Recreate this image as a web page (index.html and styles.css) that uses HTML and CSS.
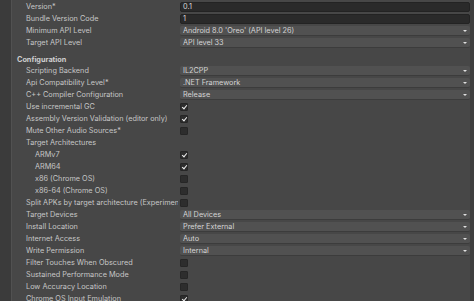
FILE: index.html
```html
<!DOCTYPE html>
<html lang="en">
<head>
  <meta charset="UTF-8" />
  <meta name="viewport" content="width=device-width, initial-scale=1" />
  <title>Player Settings - Android</title>
  <link rel="stylesheet" href="styles.css">
</head>
<body>
  <div class="window">
    <div class="gutter"></div>

    <div class="inspector">
      <div class="row">
        <span class="label">Version*</span>
        <div class="value"><div class="text-field">0.1</div></div>
      </div>
      <div class="row">
        <span class="label">Bundle Version Code</span>
        <div class="value"><div class="text-field">1</div></div>
      </div>
      <div class="row">
        <span class="label">Minimum API Level</span>
        <div class="value"><div class="dropdown">Android 8.0 'Oreo' (API level 26)</div></div>
      </div>
      <div class="row">
        <span class="label">Target API Level</span>
        <div class="value"><div class="dropdown">API level 33</div></div>
      </div>

      <div class="section-title">Configuration</div>

      <div class="row">
        <span class="label">Scripting Backend</span>
        <div class="value"><div class="dropdown">IL2CPP</div></div>
      </div>
      <div class="row">
        <span class="label">Api Compatibility Level*</span>
        <div class="value"><div class="dropdown">.NET Framework</div></div>
      </div>
      <div class="row">
        <span class="label">C++ Compiler Configuration</span>
        <div class="value"><div class="dropdown">Release</div></div>
      </div>
      <div class="row">
        <span class="label">Use incremental GC</span>
        <div class="value"><span class="checkbox checked"></span></div>
      </div>
      <div class="row">
        <span class="label">Assembly Version Validation (editor only)</span>
        <div class="value"><span class="checkbox checked"></span></div>
      </div>
      <div class="row">
        <span class="label">Mute Other Audio Sources*</span>
        <div class="value"><span class="checkbox"></span></div>
      </div>
      <div class="row">
        <span class="label">Target Architectures</span>
        <div class="value"></div>
      </div>
      <div class="row">
        <span class="label indent">ARMv7</span>
        <div class="value"><span class="checkbox checked"></span></div>
      </div>
      <div class="row">
        <span class="label indent">ARM64</span>
        <div class="value"><span class="checkbox checked"></span></div>
      </div>
      <div class="row">
        <span class="label indent">x86 (Chrome OS)</span>
        <div class="value"><span class="checkbox"></span></div>
      </div>
      <div class="row">
        <span class="label indent">x86-64 (Chrome OS)</span>
        <div class="value"><span class="checkbox"></span></div>
      </div>
      <div class="row">
        <span class="label">Split APKs by target architecture (Experimental)</span>
        <div class="value"><span class="checkbox"></span></div>
      </div>
      <div class="row">
        <span class="label">Target Devices</span>
        <div class="value"><div class="dropdown">All Devices</div></div>
      </div>
      <div class="row">
        <span class="label">Install Location</span>
        <div class="value"><div class="dropdown">Prefer External</div></div>
      </div>
      <div class="row">
        <span class="label">Internet Access</span>
        <div class="value"><div class="dropdown">Auto</div></div>
      </div>
      <div class="row">
        <span class="label">Write Permission</span>
        <div class="value"><div class="dropdown">Internal</div></div>
      </div>
      <div class="row">
        <span class="label">Filter Touches When Obscured</span>
        <div class="value"><span class="checkbox"></span></div>
      </div>
      <div class="row">
        <span class="label">Sustained Performance Mode</span>
        <div class="value"><span class="checkbox"></span></div>
      </div>
      <div class="row">
        <span class="label">Low Accuracy Location</span>
        <div class="value"><span class="checkbox"></span></div>
      </div>
      <div class="row">
        <span class="label">Chrome OS Input Emulation</span>
        <div class="value"><span class="checkbox checked"></span></div>
      </div>
    </div>

    <div class="scrollbar"></div>
  </div>
</body>
</html>
```

FILE: styles.css
```css
body {
  margin: 0;
  background: #474747;
  color: #c6c6c6;
  font-family: Inter, "Noto Sans", sans-serif;
  font-size: 7.3px;
  overflow: hidden;
}
.window {
  display: flex;
  height: 301px;
}
.gutter {
  width: 11px;
  flex: 0 0 11px;
  background: #3b3b3b;
  border-right: 1px solid #515151;
}
.inspector {
  flex: 1;
  padding-top: 1px;
  min-width: 0;
}
.scrollbar {
  width: 4px;
  flex: 0 0 4px;
  background: #3e3e3e;
}
.row {
  display: flex;
  align-items: center;
  height: 12px;
}
.label {
  flex: 0 0 166px;
  padding-left: 14px;
  box-sizing: border-box;
  white-space: nowrap;
  overflow: hidden;
  line-height: 12px;
}
.label.indent {
  padding-left: 23px;
}
.section-title {
  margin-top: 5px;
  height: 11px;
  line-height: 11px;
  padding-left: 5px;
  font-weight: 700;
  color: #cfcfcf;
}
.value {
  flex: 1;
  display: flex;
  align-items: center;
  padding-left: 2px;
}
.text-field, .dropdown {
  flex: 1;
  height: 10px;
  padding-left: 3px;
  border-radius: 2px;
  box-sizing: border-box;
  color: #d4d4d4;
  white-space: nowrap;
  position: relative;
}
.text-field {
  background: #2a2a2a;
  border: 1px solid #232323;
  line-height: 8px;
  padding-left: 2px;
}
.dropdown {
  background: #515151;
  border-bottom: 1px solid #3c3c3c;
  line-height: 9px;
}
.dropdown::after {
  content: "";
  position: absolute;
  right: 3px;
  top: 4px;
  border-left: 2px solid transparent;
  border-right: 2px solid transparent;
  border-top: 2px solid #e0e0e0;
}
.checkbox {
  width: 8px;
  height: 8px;
  background: #2d2d2d;
  border: 1px solid #262626;
  border-radius: 1px;
  box-sizing: border-box;
  position: relative;
}
.checkbox.checked::after {
  content: "";
  position: absolute;
  left: 1px;
  top: 1px;
  width: 4px;
  height: 2px;
  border-left: 1px solid #eeeeee;
  border-bottom: 1px solid #eeeeee;
  transform: rotate(-50deg);
}
```
